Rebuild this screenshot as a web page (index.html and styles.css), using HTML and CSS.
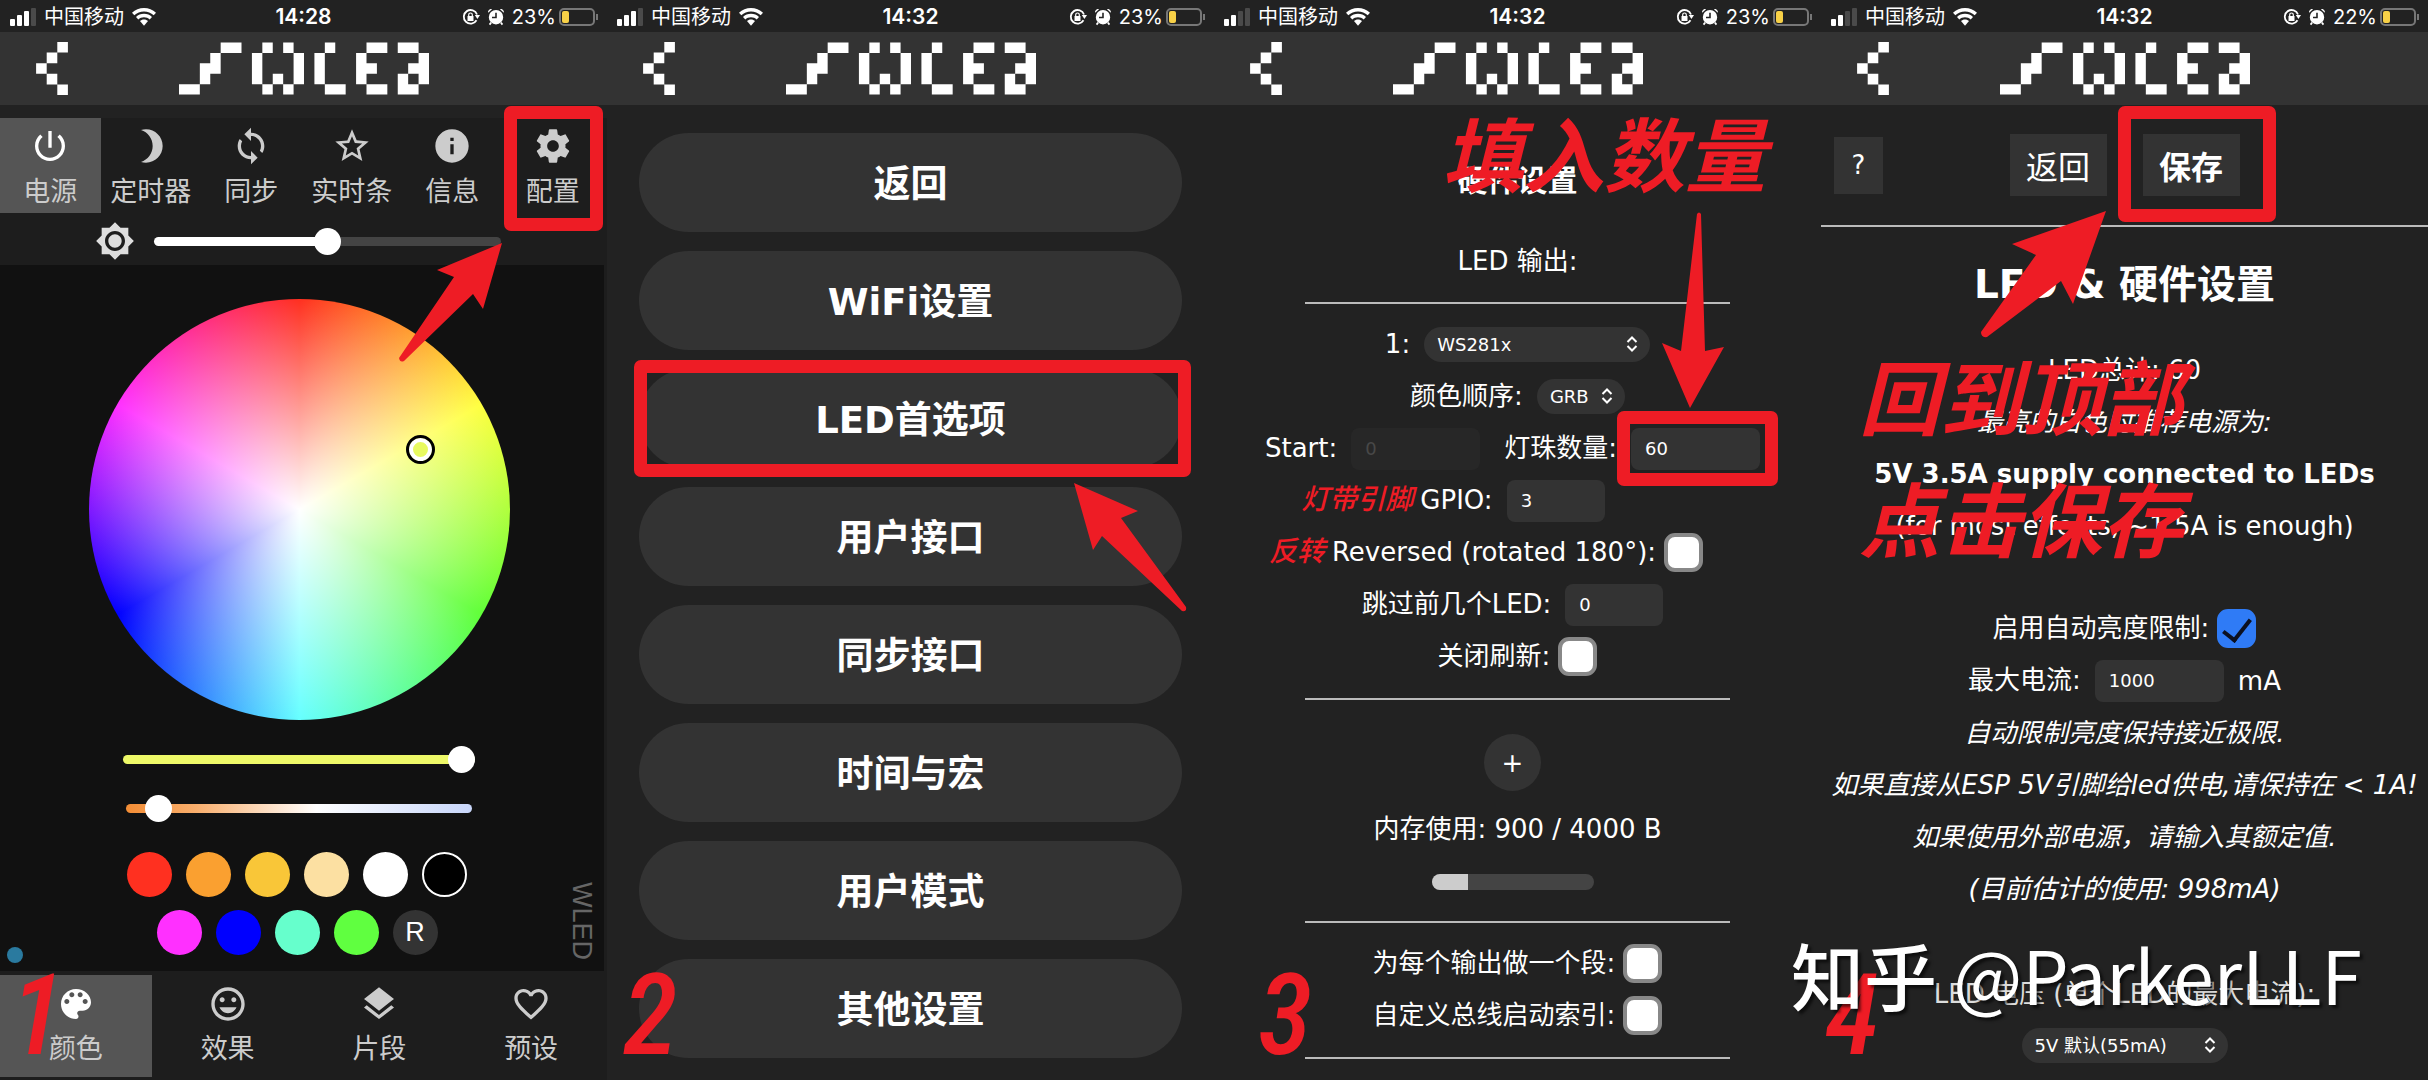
FILE: index.html
```html
<!DOCTYPE html>
<html lang="zh-CN">
<head>
    <meta charset="utf-8">
    <title>WLED</title>
    <meta name="viewport" content="width=device-width, initial-scale=1">
    <link rel="stylesheet" href="styles.css">
</head>
<body>
    <!-- Shared icons -->
    <svg class="defs" aria-hidden="true">
        <symbol id="wifi" viewBox="0 0 24 18">
            <path d="M12 0C7.400 0 3.200 1.800 0 4.700L2.300 7.200C4.900 4.900 8.300 3.500 12 3.500s7.100 1.400 9.700 3.700L24 4.700C20.800 1.800 16.600 0 12 0z"/>
            <path d="M12 5.800c-3.100 0-5.900 1.200-8 3.100l2.300 2.500C7.800 10.100 9.800 9.200 12 9.200s4.200.9 5.700 2.200L20 8.900c-2.100-1.900-4.900-3.100-8-3.100z"/>
            <path d="M12 11.500c-1.600 0-3 .6-4 1.600l4 4.600 4-4.600c-1-1-2.400-1.600-4-1.600z"/>
        </symbol>
        <symbol id="rotation" viewBox="0 0 18 18">
            <path d="M14.500 12.200A6.800 6.800 0 1 1 15 6.500" fill="none" stroke="currentColor" stroke-width="1.800"/>
            <path d="M12.800 7h5.200l-2.600 4z"/>
            <path d="M5.500 8h6v5h-6z"/>
            <path d="M6.700 8V6.800a1.800 1.800 0 0 1 3.600 0V8" fill="none" stroke="currentColor" stroke-width="1.200"/>
        </symbol>
        <symbol id="alarm" viewBox="0 0 18 18">
            <path fill-rule="evenodd" d="M9 2a7.200 7.200 0 1 0 0 14.400A7.200 7.200 0 1 0 9 2zm-.8 2.800h1.600v5.400H5V8.700h3.200z"/>
            <path d="M1.200 4.800C.6 2.800 2.800.6 5 1.200zM16.800 4.800c.6-2-1.600-4.200-3.800-3.600zM3.400 14l1.400 1.200-1.600 2-1.300-1.100zM14.600 14l-1.400 1.200 1.600 2 1.300-1.100z"/>
        </symbol>
        <symbol id="back" viewBox="0 0 3 5">
            <path d="M2 0h1v1H2zM1 1h1v1H1zM0 2h1v1H0zM1 3h1v1H1zM2 4h1v1H2z"/>
        </symbol>
        <symbol id="logo" viewBox="0 0 24 5">
            <path d="M4 0h2v1H4zM3 1h1v2H3zM2 2h1v2H2zM0 4h2v1H0z"/>
            <path d="M8 0h1v1H8zM10 0h1v1h-1zM7 1h1v3H7zM11 1h1v3h-1zM9 3h1v1H9zM8 4h1v1H8zM10 4h1v1h-1z"/>
            <path d="M14 0h1v1h-1zM13 1h1v3h-1zM14 4h2v1h-2z"/>
            <path d="M18 0h2v1h-2zM17 1h1v3h-1zM18 2h1v1h-1zM18 4h2v1h-2z"/>
            <path d="M21 0h2v1h-2zM23 1h1v3h-1zM22 2h1v1h-1zM21 3h1v2h-1zM22 4h1v1h-1z"/>
        </symbol>
        <symbol id="updown" viewBox="0 0 12 16">
            <path d="M1.500 6L6 1.500 10.500 6M1.500 10L6 14.500 10.500 10" fill="none" stroke="currentColor" stroke-width="2"/>
        </symbol>
    </svg>

    <div class="board">
        <!-- Color picker -->
        <section class="screen">
            <div class="status">
                <span class="carrier"><span class="signal"><i></i><i></i><i></i><i class="off"></i></span>中国移动<svg class="wifi"><use href="#wifi"/></svg></span>
                <b class="clock">14:28</b>
                <span class="power"><svg class="mini"><use href="#rotation"/></svg><svg class="mini"><use href="#alarm"/></svg>23%<span class="battery"></span></span>
            </div>
            <header class="top">
                <a href="#" class="back" aria-label="返回"><svg><use href="#back"/></svg></a>
                <svg class="logo"><use href="#logo"/></svg>
            </header>

            <div class="toolbar">
                <nav class="tabs">
                    <button class="tab active"><svg viewBox="0 0 24 24"><path d="M13 3h-2v10h2V3zm4.830 2.170l-1.420 1.420C17.990 7.860 19 9.810 19 12c0 3.870-3.130 7-7 7s-7-3.130-7-7c0-2.190 1.010-4.140 2.580-5.420L6.170 5.170C4.230 6.820 3 9.260 3 12c0 4.970 4.030 9 9 9s9-4.030 9-9c0-2.740-1.230-5.180-3.170-6.830z"/></svg>电源</button>
                    <button class="tab"><svg viewBox="0 0 24 24"><path d="M9 2c-1.050 0-2.050.16-3 .46 4.060 1.270 7 5.060 7 9.540 0 4.480-2.940 8.270-7 9.540.95.3 1.950.46 3 .46 5.520 0 10-4.480 10-10S14.520 2 9 2z"/></svg>定时器</button>
                    <button class="tab"><svg viewBox="0 0 24 24"><path d="M12 4V1L8 5l4 4V6c3.310 0 6 2.690 6 6 0 1.010-.25 1.970-.7 2.800l1.460 1.460C19.540 15.030 20 13.570 20 12c0-4.420-3.580-8-8-8zm0 14c-3.310 0-6-2.690-6-6 0-1.010.25-1.970.7-2.800L5.240 7.740C4.460 8.970 4 10.430 4 12c0 4.420 3.580 8 8 8v3l4-4-4-4v3z"/></svg>同步</button>
                    <button class="tab"><svg viewBox="0 0 24 24"><path d="M22 9.240l-7.190-.62L12 2 9.190 8.630 2 9.240l5.460 4.730L5.820 21 12 17.270 18.180 21l-1.630-7.030L22 9.240zM12 15.400l-3.760 2.270 1-4.280-3.320-2.880 4.380-.38L12 6.100l1.710 4.040 4.380.38-3.320 2.880 1 4.280L12 15.400z"/></svg>实时条</button>
                    <button class="tab"><svg viewBox="0 0 24 24"><path d="M12 2C6.480 2 2 6.480 2 12s4.480 10 10 10 10-4.480 10-10S17.520 2 12 2zm1 15h-2v-6h2v6zm0-8h-2V7h2v2z"/></svg>信息</button>
                    <button class="tab marked mark-tab"><svg viewBox="0 0 24 24"><path d="M19.430 12.980c.04-.32.07-.64.07-.98s-.03-.66-.07-.98l2.110-1.650c.19-.15.24-.42.12-.64l-2-3.460c-.12-.22-.39-.3-.61-.22l-2.490 1c-.52-.4-1.080-.73-1.690-.98l-.38-2.650C14.460 2.180 14.250 2 14 2h-4c-.25 0-.46.18-.49.42l-.38 2.650c-.61.25-1.170.59-1.690.98l-2.490-1c-.23-.09-.49 0-.61.22l-2 3.460c-.13.22-.07.49.12.64l2.110 1.650c-.04.32-.07.65-.07.98s.03.66.07.98l-2.110 1.650c-.19.15-.24.42-.12.64l2 3.460c.12.22.39.3.61.22l2.490-1c.52.4 1.080.73 1.690.98l.38 2.650c.03.24.24.42.49.42h4c.25 0 .46-.18.49-.42l.38-2.650c.61-.25 1.170-.59 1.690-.98l2.490 1c.23.09.49 0 .61-.22l2-3.460c.12-.22.07-.49-.12-.64l-2.110-1.650zM12 15.500c-1.930 0-3.500-1.570-3.500-3.500s1.570-3.500 3.500-3.500 3.500 1.570 3.500 3.500-1.570 3.500-3.500 3.500z"/></svg>配置</button>
                </nav>
                <div class="brightness">
                    <svg viewBox="0 0 24 24"><path d="M20 8.690V4h-4.690L12 .69 8.690 4H4v4.690L.69 12 4 15.310V20h4.690L12 23.310 15.310 20H20v-4.690L23.310 12 20 8.690zM12 18c-3.310 0-6-2.690-6-6s2.690-6 6-6 6 2.690 6 6-2.690 6-6 6zm0-10c-2.210 0-4 1.790-4 4s1.790 4 4 4 4-1.790 4-4-1.790-4-4-4z"/></svg>
                    <input type="range" class="slider bri" min="0" max="100" value="50" aria-label="亮度">
                </div>
            </div>

            <div class="picker">
                <div class="wheel"><span class="handle"></span></div>
                <input type="range" class="slider value" min="0" max="100" value="100" aria-label="明度">
                <input type="range" class="slider kelvin" min="0" max="100" value="6" aria-label="色温">
                <div class="swatches">
                    <button class="swatch red" aria-label="红"></button>
                    <button class="swatch orange" aria-label="橙"></button>
                    <button class="swatch amber" aria-label="琥珀"></button>
                    <button class="swatch warm" aria-label="暖白"></button>
                    <button class="swatch white" aria-label="白"></button>
                    <button class="swatch black" aria-label="黑"></button>
                    <button class="swatch pink" aria-label="粉"></button>
                    <button class="swatch blue" aria-label="蓝"></button>
                    <button class="swatch aqua" aria-label="青"></button>
                    <button class="swatch green" aria-label="绿"></button>
                    <button class="swatch random">R</button>
                </div>
                <span class="dot"></span>
                <span class="brand">WLED</span>
            </div>

            <nav class="tabs bottom">
                <button class="tab active"><svg viewBox="0 0 24 24"><path d="M12 3c-4.970 0-9 4.030-9 9s4.030 9 9 9c.83 0 1.500-.67 1.500-1.500 0-.39-.15-.74-.39-1.010-.23-.26-.38-.61-.38-.99 0-.83.67-1.500 1.500-1.500H16c2.760 0 5-2.240 5-5 0-4.420-4.030-8-9-8zm-5.500 9c-.83 0-1.500-.67-1.500-1.500S5.670 9 6.500 9 8 9.670 8 10.500 7.330 12 6.500 12zm3-4C8.670 8 8 7.330 8 6.500S8.670 5 9.500 5s1.500.67 1.500 1.500S10.330 8 9.500 8zm5 0c-.83 0-1.500-.67-1.500-1.500S13.670 5 14.500 5s1.500.67 1.500 1.500S15.330 8 14.500 8zm3 4c-.83 0-1.500-.67-1.500-1.500S16.670 9 17.500 9s1.500.67 1.500 1.500-.67 1.500-1.500 1.500z"/></svg>颜色</button>
                <button class="tab"><svg viewBox="0 0 24 24"><path d="M11.990 2C6.470 2 2 6.480 2 12s4.470 10 9.990 10C17.520 22 22 17.520 22 12S17.520 2 11.990 2zM12 20c-4.420 0-8-3.580-8-8s3.580-8 8-8 8 3.580 8 8-3.580 8-8 8zm3.500-9c.83 0 1.500-.67 1.500-1.500S16.330 8 15.500 8 14 8.670 14 9.500s.67 1.500 1.500 1.500zm-7 0c.83 0 1.500-.67 1.500-1.500S9.330 8 8.500 8 7 8.670 7 9.500 7.670 11 8.500 11zm3.500 6.500c2.330 0 4.310-1.460 5.110-3.500H6.890c.8 2.040 2.780 3.500 5.110 3.500z"/></svg>效果</button>
                <button class="tab"><svg viewBox="0 0 24 24"><path d="M11.990 18.540l-7.370-5.730L3 14.070l9 7 9-7-1.630-1.270-7.380 5.740zM12 16l7.360-5.730L21 9l-9-7-9 7 1.630 1.270L12 16z"/></svg>片段</button>
                <button class="tab"><svg viewBox="0 0 24 24"><path d="M16.500 3c-1.740 0-3.410.81-4.500 2.090C10.910 3.810 9.240 3 7.500 3 4.420 3 2 5.420 2 8.500c0 3.780 3.400 6.860 8.550 11.540L12 21.350l1.450-1.320C18.600 15.360 22 12.280 22 8.500 22 5.420 19.580 3 16.500 3zm-4.400 15.550l-.1.1-.1-.1C7.140 14.240 4 11.390 4 8.500 4 6.500 5.500 5 7.500 5c1.540 0 3.040.99 3.570 2.360h1.870C13.460 5.990 14.960 5 16.500 5c2 0 3.500 1.500 3.500 3.500 0 2.890-3.140 5.740-7.900 10.050z"/></svg>预设</button>
            </nav>

            <svg class="arrow arrow-1" viewBox="0 0 104 120"><path d="M104 0L39 27l17 7L1 115q1 5 5 3L75 51l10 15z"/></svg>
            <span class="step step-1">1</span>
        </section>

        <!-- Settings menu -->
        <section class="screen">
            <div class="status">
                <span class="carrier"><span class="signal"><i></i><i></i><i></i><i class="off"></i></span>中国移动<svg class="wifi"><use href="#wifi"/></svg></span>
                <b class="clock">14:32</b>
                <span class="power"><svg class="mini"><use href="#rotation"/></svg><svg class="mini"><use href="#alarm"/></svg>23%<span class="battery"></span></span>
            </div>
            <header class="top">
                <a href="#" class="back" aria-label="返回"><svg><use href="#back"/></svg></a>
                <svg class="logo"><use href="#logo"/></svg>
            </header>

            <nav class="menu">
                <button>返回</button>
                <button>WiFi设置</button>
                <button class="marked mark-menu">LED首选项</button>
                <button>用户接口</button>
                <button>同步接口</button>
                <button>时间与宏</button>
                <button>用户模式</button>
                <button>其他设置</button>
            </nav>

            <svg class="arrow arrow-2" viewBox="0 0 114 130"><path d="M0 0l64 28-17 7 65 89q1 5-4 4L28 53 19 67z"/></svg>
            <span class="step step-2">2</span>
        </section>

        <!-- LED outputs -->
        <section class="screen">
            <div class="status">
                <span class="carrier"><span class="signal"><i></i><i></i><i class="off"></i><i class="off"></i></span>中国移动<svg class="wifi"><use href="#wifi"/></svg></span>
                <b class="clock">14:32</b>
                <span class="power"><svg class="mini"><use href="#rotation"/></svg><svg class="mini"><use href="#alarm"/></svg>23%<span class="battery"></span></span>
            </div>
            <header class="top">
                <a href="#" class="back" aria-label="返回"><svg><use href="#back"/></svg></a>
                <svg class="logo"><use href="#logo"/></svg>
            </header>

            <form class="form outputs">
                <h3>硬件设置</h3>
                <p>LED 输出:</p>
                <hr>
                <div class="row">
                    <label for="type">1:</label>
                    <span class="select type"><select id="type"><option>WS281x</option></select><svg><use href="#updown"/></svg></span>
                </div>
                <div class="row">
                    <label for="order">颜色顺序:</label>
                    <span class="select order"><select id="order"><option>GRB</option></select><svg><use href="#updown"/></svg></span>
                </div>
                <div class="row numbers">
                    <label for="start">Start:</label>
                    <input type="number" id="start" class="wide" value="0" disabled>
                    <label for="count" class="second">灯珠数量:</label>
                    <span class="marked mark-input"><input type="number" id="count" class="wide" value="60"></span>
                </div>
                <div class="row numbers">
                    <label for="gpio" class="hinted"><span class="hint">灯带引脚</span>GPIO:</label>
                    <input type="number" id="gpio" value="3">
                </div>
                <div class="row">
                    <label for="reversed" class="hinted"><span class="hint">反转</span>Reversed (rotated 180°):</label>
                    <input type="checkbox" id="reversed">
                </div>
                <div class="row numbers">
                    <label for="skip">跳过前几个LED:</label>
                    <input type="number" id="skip" value="0">
                </div>
                <div class="row">
                    <label for="refresh">关闭刷新:</label>
                    <input type="checkbox" id="refresh">
                </div>
                <hr>
                <div class="usage">
                    <button type="button" class="add">+</button>
                </div>
                <p>内存使用: 900 / 4000 B</p>
                <div class="usage">
                    <div class="memory"><div style="width: 22.5%"></div></div>
                </div>
                <hr>
                <div class="row">
                    <label for="segments">为每个输出做一个段:</label>
                    <input type="checkbox" id="segments">
                </div>
                <div class="row">
                    <label for="indices">自定义总线启动索引:</label>
                    <input type="checkbox" id="indices">
                </div>
                <hr>
            </form>

            <span class="note note-count">填入数量</span>
            <svg class="arrow arrow-3" viewBox="0 0 62 196"><path d="M35 2q2-3 4 0l4 137 19-4-34 61L0 131l19 8z"/></svg>
            <span class="step step-3">3</span>
        </section>

        <!-- LED and hardware setup -->
        <section class="screen">
            <div class="status">
                <span class="carrier"><span class="signal"><i></i><i></i><i class="off"></i><i class="off"></i></span>中国移动<svg class="wifi"><use href="#wifi"/></svg></span>
                <b class="clock">14:32</b>
                <span class="power"><svg class="mini"><use href="#rotation"/></svg><svg class="mini"><use href="#alarm"/></svg>22%<span class="battery"></span></span>
            </div>
            <header class="top">
                <a href="#" class="back" aria-label="返回"><svg><use href="#back"/></svg></a>
                <svg class="logo"><use href="#logo"/></svg>
            </header>

            <form class="form hardware">
                <div class="actions">
                    <button type="button" class="help">?</button>
                    <div class="buttons">
                        <button type="button">返回</button>
                        <button type="submit" class="marked mark-save">保存</button>
                    </div>
                </div>
                <h2>LED &amp; 硬件设置</h2>
                <p>LED总计: 60</p>
                <p><i>最亮的白色时推荐电源为:</i></p>
                <p><b>5V 3.5A supply connected to LEDs</b></p>
                <p>(for most effects, ~1.5A is enough)</p>
                <div class="row limiter">
                    <label for="limiter">启用自动亮度限制:</label>
                    <input type="checkbox" id="limiter" checked>
                </div>
                <div class="row">
                    <label for="current">最大电流:</label>
                    <input type="number" id="current" class="wide current" value="1000">
                    <span>mA</span>
                </div>
                <p><i>自动限制亮度保持接近极限.</i></p>
                <p><i>如果直接从ESP 5V引脚给led供电,请保持在 &lt; 1A!</i></p>
                <p><i>如果使用外部电源，请输入其额定值.</i></p>
                <p><i>(目前估计的使用: 998mA)</i></p>
                <label for="voltage" class="voltage-label">LED 电压 (单个LED的最大电流):</label>
                <div class="row">
                    <span class="select voltage"><select id="voltage"><option>5V 默认(55mA)</option></select><svg><use href="#updown"/></svg></span>
                </div>
            </form>

            <span class="note note-save">回到顶部<br>点击保存</span>
            <svg class="arrow arrow-4" viewBox="0 0 126 128"><path d="M126 0L32 33l24 11L1 121q0 6 6 5L81 70l12 23z"/></svg>
            <span class="step step-4">4</span>
            <span class="watermark"><b>知乎</b> @ParkerLLF</span>
        </section>
    </div>
</body>
</html>
```
FILE: styles.css
```css
* {
    box-sizing: border-box;
}
body {
    margin: 0;
    background-color: #222;
    color: #fff;
    font-family: "DejaVu Sans", "Noto Sans CJK SC", sans-serif;
    font-size: 26px;
    overflow-x: hidden;
}
button, input, select {
    font-family: inherit;
    color: inherit;
    border: none;
    margin: 0;
    padding: 0;
}
svg {
    fill: currentColor;
    flex: none;
}
.defs {
    position: absolute;
    width: 0;
    height: 0;
}
.board {
    display: grid;
    grid-template-columns: repeat(4, minmax(0, 1fr));
    min-height: 100vh;
}
.screen {
    position: relative;
    display: flex;
    flex-direction: column;
}

/* Phone status bar */
.status {
    display: grid;
    grid-template-columns: 1fr auto 1fr;
    align-items: center;
    height: 32px;
    padding: 2px 10px 0;
    font-family: Inter, "Noto Sans CJK SC", sans-serif;
    font-size: 20px;
    line-height: 30px;
}
.carrier, .power {
    display: flex;
    align-items: center;
    gap: 8px;
}
.signal {
    display: flex;
    align-items: flex-end;
    gap: 2px;
    height: 18px;
}
.signal i {
    width: 5px;
    height: 7px;
    border-radius: 1px;
    background-color: #fff;
}
.signal i:nth-child(2) {
    height: 11px;
}
.signal i:nth-child(3) {
    height: 15px;
}
.signal i:nth-child(4) {
    height: 18px;
}
.signal .off {
    background-color: #4a4a4a;
}
.wifi {
    width: 24px;
    height: 18px;
}
.clock {
    font-size: 21px;
    font-weight: 600;
}
.power {
    justify-content: flex-end;
    gap: 3px;
}
.mini {
    width: 18px;
    height: 18px;
    margin-right: 4px;
}
.battery {
    position: relative;
    width: 36px;
    height: 18px;
    margin-right: 2px;
    padding: 1px;
    border: 2px solid #777;
    border-radius: 5px;
}
.battery::before {
    content: "";
    display: block;
    width: 7px;
    height: 12px;
    border-radius: 2px;
    background-color: #f8d147;
}
.battery::after {
    content: "";
    position: absolute;
    right: -5px;
    top: 4px;
    width: 2px;
    height: 6px;
    background-color: #777;
}

/* Title bar */
.top {
    display: flex;
    align-items: center;
    justify-content: center;
    position: relative;
    height: 73px;
    background-color: #333;
}
.back {
    position: absolute;
    left: 36px;
    color: #fff;
}
.back svg {
    display: block;
    width: 32px;
    height: 53px;
}
.logo {
    width: 250px;
    height: 53px;
}

/* Tabs */
.toolbar {
    margin-top: 13px;
    background-color: #1d1d1d;
}
.tabs {
    display: flex;
    padding-right: 4px;
}
.tab {
    flex: 1;
    display: flex;
    flex-direction: column;
    align-items: center;
    gap: 4px;
    height: 95px;
    padding-top: 8px;
    background-color: transparent;
    color: #ccc;
    font-family: "Noto Sans CJK SC", sans-serif;
    font-size: 27px;
    line-height: 40px;
}
.tab svg {
    width: 40px;
    height: 40px;
}
.tab.active {
    background-color: #555;
}
.tab.active svg {
    color: #fff;
}
.bottom {
    padding: 4px 0 3px;
    background-color: #1d1d1d;
}
.bottom .tab {
    height: 102px;
    padding-top: 9px;
    gap: 3px;
}
.brightness {
    display: flex;
    align-items: center;
    gap: 19px;
    height: 52px;
    padding: 4px 106px 0 95px;
    color: #ddd;
}
.brightness svg {
    width: 40px;
    height: 40px;
}

/* Sliders */
.slider {
    appearance: none;
    display: block;
    height: 27px;
    background-color: transparent;
}
.slider::-webkit-slider-runnable-track {
    height: 9px;
    border-radius: 5px;
    background: #fff;
}
.slider::-webkit-slider-thumb {
    appearance: none;
    width: 27px;
    height: 27px;
    margin-top: -9px;
    border-radius: 50%;
    background-color: #fff;
}
.bri {
    flex: 1;
    min-width: 0;
}
.bri::-webkit-slider-runnable-track {
    background: linear-gradient(to right, #fff 50%, #444 50%);
}
.value {
    width: 352px;
    margin-top: 26px;
}
.value::-webkit-slider-runnable-track {
    background: #eef968;
}
.kelvin {
    width: 346px;
    margin-top: 22px;
}
.kelvin::-webkit-slider-runnable-track {
    background: linear-gradient(to right, #f38d35, #f9ae6c 20%, #fff 55%, #c8d6fa);
}

/* Picker */
.picker {
    position: relative;
    flex: 1;
    display: flex;
    flex-direction: column;
    align-items: center;
    padding: 34px 6px 0 0;
    border-right: 3px solid #1d1d1d;
    background-color: #111;
}
.wheel {
    position: relative;
    width: 421px;
    height: 421px;
    border-radius: 50%;
    background: radial-gradient(closest-side, #fff, rgba(255, 255, 255, 0)), conic-gradient(#ff3020, #ffff40 60deg, #60ff38 120deg, #66ffff 180deg, #00f 240deg, #ff30ff 300deg, #ff3020);
}
.handle {
    position: absolute;
    left: 317px;
    top: 136px;
    width: 29px;
    height: 29px;
    border: 3px solid #000;
    border-radius: 50%;
    background-color: #e8fa60;
    box-shadow: inset 0 0 0 4px #fff;
}
.swatches {
    display: flex;
    flex-wrap: wrap;
    justify-content: center;
    gap: 13px 14px;
    width: 348px;
    margin-top: 30px;
    margin-right: 4px;
}
.swatch {
    width: 45px;
    height: 45px;
    border-radius: 50%;
}
.red {
    background-color: #ff3020;
}
.orange {
    background-color: #faa030;
}
.amber {
    background-color: #f9c638;
}
.warm {
    background-color: #fce0a2;
}
.white {
    background-color: #fff;
}
.black {
    border: 2px solid #fff;
    background-color: #000;
}
.pink {
    background-color: #ff30ff;
}
.blue {
    background-color: #00f;
}
.aqua {
    background-color: #66ffcc;
}
.green {
    background-color: #60ff40;
}
.random {
    background-color: #333;
    font-family: "Liberation Sans", sans-serif;
    font-size: 27px;
}
.dot {
    position: absolute;
    left: 7px;
    bottom: 8px;
    width: 16px;
    height: 16px;
    border-radius: 50%;
    background-color: #2a7a9f;
}
.brand {
    position: absolute;
    right: 7px;
    bottom: 11px;
    color: #666;
    font-family: "Liberation Sans", sans-serif;
    font-size: 27px;
    line-height: 30px;
    writing-mode: vertical-rl;
}

/* Settings menu */
.menu {
    display: flex;
    flex-direction: column;
    gap: 19px;
    padding: 28px 32px 0;
}
.menu button {
    height: 99px;
    padding-bottom: 3px;
    border-radius: 50px;
    background-color: #333;
    font-size: 37px;
    font-weight: bold;
}

/* Settings forms */
.form {
    text-align: center;
    line-height: 52px;
}
.form p, .form h2, .form h3 {
    margin: 0;
}
.form hr {
    width: 70%;
    height: 2px;
    margin: 15px auto;
    border: none;
    background-color: #bbb;
}
.form .row label {
    height: 54px;
}
.outputs h3 {
    margin: 50px 0 28px;
    font-size: 30px;
}
.row {
    display: flex;
    align-items: center;
    justify-content: center;
    height: 52px;
    gap: 8px;
    padding-bottom: 1px;
}
.numbers {
    padding-right: 10px;
}
.second {
    margin-left: 16px;
}
input[type="number"] {
    appearance: textfield;
    width: 98px;
    height: 42px;
    margin-left: 6px;
    padding: 0 14px;
    border-radius: 8px;
    background-color: #333;
    font-size: 18px;
}
input[type="number"].wide {
    width: 129px;
}
input[type="number"].current {
    margin-right: 6px;
}
input[type="number"]:disabled {
    background-color: #272727;
    color: #484848;
}
input[type="checkbox"] {
    appearance: none;
    width: 39px;
    height: 39px;
    border: 4px solid #888;
    border-radius: 11px;
    background-color: #fff;
}
input[type="checkbox"]:checked {
    display: grid;
    place-items: center;
    border-color: #2f7bf6;
    background-color: #2f7bf6;
}
input[type="checkbox"]:checked::after {
    content: "";
    width: 12px;
    height: 24px;
    margin-bottom: 5px;
    border: solid #0b1020;
    border-width: 0 4px 4px 0;
    transform: rotate(38deg);
}
.select {
    position: relative;
    display: flex;
    margin-left: 6px;
}
.select select {
    appearance: none;
    width: 100%;
    height: 35px;
    padding: 0 13px;
    border-radius: 18px;
    background-color: #333;
    font-size: 18px;
}
.select svg {
    position: absolute;
    right: 12px;
    top: 9px;
    width: 12px;
    height: 16px;
    pointer-events: none;
}
.type {
    width: 226px;
}
.order {
    width: 88px;
}
.voltage {
    width: 206px;
    margin-left: 0;
}
.usage {
    display: flex;
    justify-content: center;
    padding-right: 10px;
}
.add {
    width: 57px;
    height: 57px;
    margin: 19px 0 12px;
    border-radius: 50%;
    background-color: #333;
    font-size: 26px;
}
.memory {
    width: 162px;
    height: 16px;
    margin: 19px 0 16px;
    border-radius: 8px;
    background-color: #444;
    overflow: hidden;
}
.memory div {
    height: 16px;
    background-color: #ccc;
}
.actions {
    display: grid;
    grid-template-columns: 1fr auto 1fr;
    align-items: center;
    height: 122px;
    padding: 0 13px;
    border-bottom: 2px solid #bbb;
}
.actions button {
    width: 97px;
    height: 62px;
    background-color: #333;
    font-size: 32px;
}
.actions .help {
    width: 49px;
    height: 57px;
    font-size: 26px;
}
.actions .mark-save {
    font-weight: bold;
}
.buttons {
    display: flex;
    gap: 36px;
}
.hardware h2 {
    margin: 32px 0 33px;
    font-size: 39px;
}
.limiter {
    margin-top: 51px;
}
.voltage-label {
    display: block;
    margin-top: 53px;
    color: #ddd;
}

/* Red marks over the screens */
.marked {
    position: relative;
}
.marked::after {
    content: "";
    position: absolute;
    border: 13px solid #ee1c25;
    border-radius: 7px;
    pointer-events: none;
}
.mark-tab::after {
    inset: -12px 0 -18px 1px;
}
.mark-menu::after {
    inset: -9px -9px -9px -5px;
}
.mark-input {
    display: flex;
}
.mark-input::after {
    inset: -17px -18px -16px -8px;
}
.mark-save::after {
    inset: -28px -36px -26px -25px;
}
.hinted {
    position: relative;
}
.hint {
    position: absolute;
    right: 100%;
    margin-right: 7px;
    color: #ee1c25;
    font-size: 28px;
    font-style: italic;
    font-weight: 500;
    white-space: nowrap;
}
.note, .step, .arrow {
    position: absolute;
    color: #ee1c25;
    white-space: nowrap;
}
.note {
    font-family: "Noto Sans CJK SC", sans-serif;
    font-size: 81px;
    font-style: italic;
    font-weight: bold;
    line-height: 122px;
}
.note-count {
    left: 228px;
    top: 90px;
}
.note-save {
    left: 38px;
    top: 333px;
}
.step {
    font-family: "Liberation Sans Narrow", "Roboto Condensed", Roboto, sans-serif;
    font-size: 112px;
    font-style: italic;
    font-weight: 500;
    line-height: 112px;
    bottom: 8px;
}
.step-1 {
    left: 10px;
}
.step-2 {
    left: 16px;
}
.step-3 {
    left: 44px;
}
.step-4 {
    left: 4px;
}
.arrow-1 {
    left: 398px;
    top: 243px;
    width: 104px;
    height: 120px;
}
.arrow-2 {
    left: 467px;
    top: 483px;
    width: 114px;
    height: 130px;
}
.arrow-3 {
    left: 448px;
    top: 212px;
    width: 62px;
    height: 196px;
}
.arrow-4 {
    left: 159px;
    top: 211px;
    width: 126px;
    height: 128px;
}
.watermark {
    position: absolute;
    left: -30px;
    bottom: 57px;
    font-family: "Noto Sans CJK SC", sans-serif;
    font-size: 73px;
    line-height: 100px;
    white-space: nowrap;
    text-shadow: 3px 3px 3px rgba(0, 0, 0, 0.6);
}
.watermark b {
    font-weight: 500;
}
```
